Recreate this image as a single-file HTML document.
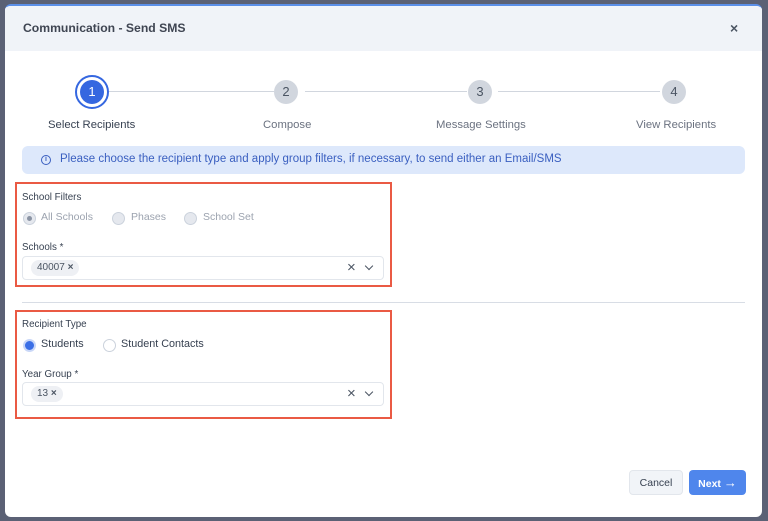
<!DOCTYPE html>
<html><head><style>
*{box-sizing:border-box;margin:0;padding:0}
body{width:768px;height:521px;background:#5b6175;font-family:"Liberation Sans",sans-serif;position:relative;overflow:hidden}
.a{position:absolute}
.modal{left:5px;top:4px;width:757px;height:513px;background:#fff;border-radius:6px;border-top:2px solid #5b8fe8;overflow:hidden}
.hdr{left:0;top:0;width:757px;height:45px;background:#f0f3f8}
.step{width:24px;height:24px;border-radius:50%;background:#d1d6de;color:#4b5563;font-size:13px;text-align:center;line-height:24px}
.line{height:1px;background:#d1d6de}
.lbl{font-size:11.3px;color:#6b7280}
.red{border:2px solid #ea5a44}
.radio{width:13px;height:13px;border-radius:50%;border:1px solid #cbd2dc;background:#e5e8ee}
.sel{border:1px solid #e2e6ec;border-radius:4px;background:#fff}
.tag{background:#eef0f4;border-radius:9px;font-size:10px;color:#4b5563;height:16px;line-height:16px;padding:0 6px}
</style></head><body>
<div class="a modal">
 <div class="a hdr"></div>
 <div class="a" style="left:18px;top:15px;font-size:12.2px;font-weight:bold;color:#3f4552">Communication - Send SMS</div>
 <div class="a" style="left:725px;top:14px;font-size:14px;color:#4b5563;font-weight:bold">×</div>
</div>
<div class="a line" style="left:108px;top:91px;width:166px"></div>
<div class="a line" style="left:305px;top:91px;width:162px"></div>
<div class="a line" style="left:498px;top:91px;width:162px"></div>
<div class="a" style="left:75px;top:75px;width:34px;height:34px;border-radius:50%;border:2px solid #3567e0;background:#fff"></div>
<div class="a step" style="left:80px;top:80px;background:#3567e0;color:#fff">1</div>
<div class="a step" style="left:274px;top:80px">2</div>
<div class="a step" style="left:468px;top:80px">3</div>
<div class="a step" style="left:662px;top:80px">4</div>
<div class="a" style="left:48px;top:119px;font-size:11.3px;color:#374151">Select Recipients</div>
<div class="a lbl" style="left:263px;top:119px">Compose</div>
<div class="a lbl" style="left:436px;top:119px">Message Settings</div>
<div class="a lbl" style="left:636px;top:119px">View Recipients</div>
<div class="a" style="left:22px;top:146px;width:723px;height:28px;background:#dde8fb;border-radius:6px"></div>
<div class="a" style="left:41px;top:155px;width:10px;height:10px;border:1.3px solid #3a5fc0;border-radius:50%;font-size:7px;color:#3a5fc0;text-align:center;line-height:8px;font-weight:bold">i</div>
<div class="a" style="left:60px;top:153px;font-size:11.5px;color:#3a5fc0">Please choose the recipient type and apply group filters, if necessary, to send either an Email/SMS</div>
<div class="a red" style="left:15px;top:182px;width:377px;height:105px"></div>
<div class="a" style="left:22px;top:192px;font-size:9.8px;color:#374151">School Filters</div>
<div class="a radio" style="left:23px;top:212px;background:#e5e8ee"><div style="width:5px;height:5px;border-radius:50%;background:#8a93a3;margin:3px"></div></div>
<div class="a" style="left:41px;top:211px;font-size:10.5px;color:#9ca3af">All Schools</div>
<div class="a radio" style="left:112px;top:212px"></div>
<div class="a" style="left:131px;top:211px;font-size:10.5px;color:#9ca3af">Phases</div>
<div class="a radio" style="left:184px;top:212px"></div>
<div class="a" style="left:203px;top:211px;font-size:10.5px;color:#9ca3af">School Set</div>
<div class="a" style="left:22px;top:242px;font-size:9.8px;color:#374151">Schools *</div>
<div class="a sel" style="left:22px;top:256px;width:362px;height:24px"></div>
<div class="a tag" style="left:31px;top:260px">40007 <b>×</b></div>
<div class="a" style="left:347px;top:259px;font-size:15px;color:#4b5563">×</div>
<div class="a" style="left:366px;top:263px;width:6px;height:6px;border-right:1.3px solid #4b5563;border-bottom:1.3px solid #4b5563;transform:rotate(45deg)"></div>
<div class="a" style="left:22px;top:302px;width:723px;height:1px;background:#d8dde5"></div>
<div class="a red" style="left:15px;top:310px;width:377px;height:109px"></div>
<div class="a" style="left:22px;top:319px;font-size:9.8px;color:#374151">Recipient Type</div>
<div class="a" style="left:23px;top:339px;width:13px;height:13px;border-radius:50%;background:#3b6fe6;border:2px solid #c9d7f7"></div>
<div class="a" style="left:41px;top:338px;font-size:10.8px;color:#374151">Students</div>
<div class="a radio" style="left:103px;top:339px;background:#fff"></div>
<div class="a" style="left:121px;top:338px;font-size:10.8px;color:#374151">Student Contacts</div>
<div class="a" style="left:22px;top:369px;font-size:9.8px;color:#374151">Year Group *</div>
<div class="a sel" style="left:22px;top:382px;width:362px;height:24px"></div>
<div class="a tag" style="left:31px;top:386px">13 <b>×</b></div>
<div class="a" style="left:347px;top:385px;font-size:15px;color:#4b5563">×</div>
<div class="a" style="left:366px;top:389px;width:6px;height:6px;border-right:1.3px solid #4b5563;border-bottom:1.3px solid #4b5563;transform:rotate(45deg)"></div>
<div class="a" style="left:629px;top:470px;width:54px;height:25px;background:#f1f4f8;border:1px solid #e2e6ec;border-radius:4px;font-size:10.5px;color:#374151;text-align:center;line-height:25px">Cancel</div>
<div class="a" style="left:689px;top:470px;width:57px;height:25px;background:#4f86ec;border-radius:4px;font-size:10.5px;color:#fff;text-align:center;line-height:26px;font-weight:bold">Next <span style="font-size:13px">&#x2192;</span></div>
</body></html>
